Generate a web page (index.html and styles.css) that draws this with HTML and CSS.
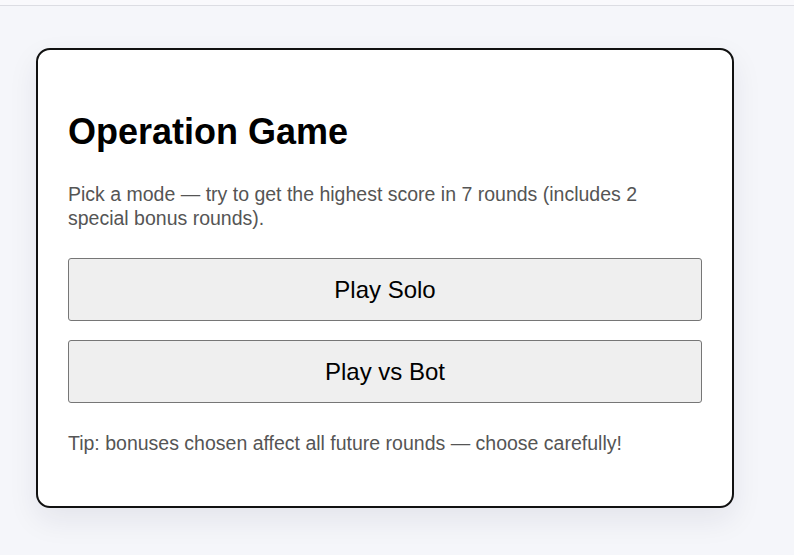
FILE: index.html
```html
<!DOCTYPE html>
<html lang="en">
<head>
  <meta charset="UTF-8">
  <meta name="viewport" content="width=device-width, initial-scale=1.0">
  <title>Operation Game</title>
  <link rel="stylesheet" href="styles.css">
</head>
<body>
  <div class="topbar"></div>
  <div id="root">
    <div class="card">
      <h1>Operation Game</h1>
      <p class="blurb">Pick a mode — try to get the highest score in 7 rounds (includes 2 special bonus rounds).</p>
      <div class="modes">
        <button class="modeButton">Play Solo</button>
        <button class="modeButton">Play vs Bot</button>
      </div>
      <p class="tip">Tip: bonuses chosen affect all future rounds — choose carefully!</p>
    </div>
  </div>
</body>
</html>
```

FILE: styles.css
```css
* {
  font-family: Arial, "Liberation Sans", Helvetica, sans-serif;
  box-sizing: border-box;
}
body {
  margin: 0;
  background: #f5f6fa;
  min-height: 555px;
}
.topbar {
  height: 6px;
  background: #f9f9fc;
  border-bottom: 1px solid #dcdde3;
}
#root {
  padding: 42px 0 0 36px;
}
.card {
  width: 698px;
  background: #fff;
  border: 2px solid #111;
  border-radius: 14px;
  padding: 30px 30px 35px;
  box-shadow: 0 12px 30px rgba(20, 30, 60, 0.08);
}
h1 {
  font-size: 36px;
  font-weight: 700;
  margin: 32px 0 0;
  line-height: 40px;
  color: #000;
}
.blurb,
.tip {
  font-size: 19.5px;
  line-height: 24px;
  color: #555;
}
.blurb {
  margin: 30px 0 0;
}
.modes {
  display: flex;
  flex-direction: column;
  gap: 19px;
  margin-top: 28px;
}
.modeButton {
  height: 63px;
  font-size: 24px;
  color: #000;
  background: #efefef;
  border: 1px solid #767676;
  border-radius: 3px;
}
.tip {
  margin: 28px 0 0;
  padding-bottom: 16px;
}
```
